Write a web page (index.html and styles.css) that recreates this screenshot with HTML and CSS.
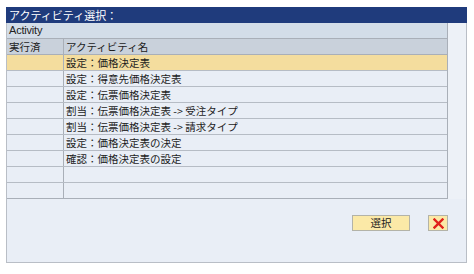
FILE: index.html
```html
<!DOCTYPE html>
<html lang="ja">
<head>
  <meta charset="UTF-8">
  <title>アクティビティ選択</title>
  <link rel="stylesheet" href="styles.css">
</head>
<body>
  <div class="dialog">
    <div class="title">アクティビティ選択：</div>
    <div class="grid">
      <div class="table">
        <div class="caption">Activity</div>
        <div class="row head">
          <div class="c1">実行済</div>
          <div class="c2">アクティビティ名</div>
        </div>
        <div class="row sel">
          <div class="c1"></div>
          <div class="c2">設定：価格決定表</div>
        </div>
        <div class="row">
          <div class="c1"></div>
          <div class="c2">設定：得意先価格決定表</div>
        </div>
        <div class="row">
          <div class="c1"></div>
          <div class="c2">設定：伝票価格決定表</div>
        </div>
        <div class="row">
          <div class="c1"></div>
          <div class="c2">割当：伝票価格決定表 -&gt; 受注タイプ</div>
        </div>
        <div class="row">
          <div class="c1"></div>
          <div class="c2">割当：伝票価格決定表 -&gt; 請求タイプ</div>
        </div>
        <div class="row">
          <div class="c1"></div>
          <div class="c2">設定：価格決定表の決定</div>
        </div>
        <div class="row">
          <div class="c1"></div>
          <div class="c2">確認：価格決定表の設定</div>
        </div>
        <div class="row">
          <div class="c1"></div>
          <div class="c2"></div>
        </div>
        <div class="row last">
          <div class="c1"></div>
          <div class="c2"></div>
        </div>
      </div>
      <div class="scroll"></div>
    </div>
    <div class="footer">
      <button class="btn ok">選択</button>
      <button class="btn cancel">
        <svg width="11" height="11" viewBox="0 0 11 11">
          <path d="M1.5 1.5 L9.5 9.5 M9.5 1.5 L1.5 9.5" stroke="#e0201a" stroke-width="2.4" stroke-linecap="square"/>
        </svg>
      </button>
    </div>
  </div>
</body>
</html>
```

FILE: styles.css
```css
body {
  margin: 0;
  background: #fff;
  font-family: "Noto Sans CJK JP", "Liberation Sans", sans-serif;
  color: #1c1c1c;
}

.dialog {
  margin: 7px 0 0 6px;
  width: 459px;
  height: 255px;
  border: 1px solid #b9bec6;
  border-top: none;
  background: #e9eef6;
  display: flex;
  flex-direction: column;
}

.title {
  height: 16px;
  margin: 0 -1px;
  background: #1f3b7c;
  color: #fff;
  font-size: 11px;
  line-height: 16px;
  padding-left: 3px;
}

.grid {
  display: flex;
}

.table {
  width: 440px;
}

.scroll {
  flex: 1;
  background: #edf1f7;
  border-left: 1px solid #a9afb8;
}

.caption {
  height: 15px;
  line-height: 15px;
  border-bottom: 1px solid #a9afb8;
  background: #d3dde8;
  font-family: "Liberation Sans", sans-serif;
  font-size: 11px;
  letter-spacing: -0.2px;
  padding-left: 2px;
  color: #222;
}

.row {
  display: flex;
  height: 15px;
  line-height: 15px;
  border-bottom: 1px solid #b6bcc5;
  font-size: 10.5px;
  background: #e9eef6;
}

.row.last {
  border-bottom-color: #a9afb8;
}

.row .c1 {
  width: 57px;
  border-right: 1px solid #a9afb8;
  padding-left: 2px;
  box-sizing: border-box;
}

.row .c2 {
  flex: 1;
  padding-left: 2px;
}

.row.head {
  background: #c9d1db;
  border-bottom-color: #a9afb8;
}

.row.sel {
  background: #f4dd9e;
}

.footer {
  display: flex;
  justify-content: flex-end;
  align-items: flex-start;
  gap: 18px;
  padding: 16px 18px 0 0;
}

.btn {
  height: 16px;
  padding: 0;
  border: 1px solid #b3b3a8;
  background: #fbe9a7;
  font-family: "Noto Sans CJK JP", sans-serif;
  font-size: 10.5px;
  line-height: 14px;
  color: #1c1c1c;
  display: flex;
  align-items: center;
  justify-content: center;
}

.btn.ok {
  width: 58px;
}

.btn.cancel {
  width: 20px;
}
```
